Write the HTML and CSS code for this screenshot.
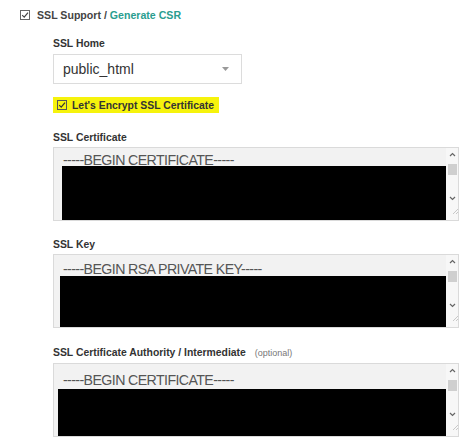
FILE: index.html
```html
<!DOCTYPE html>
<html>
<head>
<meta charset="utf-8">
<link rel="stylesheet" href="styles.css">
</head>
<body>
<div class="page">
  <div class="top-row">
    <svg class="cb" width="10" height="10" viewBox="0 0 10 10"><rect x="0.5" y="0.5" width="9" height="9" fill="#fff" stroke="#666"/><path d="M2.2 5.2 L4.2 7.2 L8 2.6" fill="none" stroke="#444" stroke-width="1.2"/></svg>
    <span class="top-label">SSL Support / <a class="link">Generate CSR</a></span>
  </div>
  <div class="section">
    <div class="label l-home">SSL Home</div>
    <div class="select">
      <span class="select-val">public_html</span>
      <svg class="caret" width="7" height="4" viewBox="0 0 7 4"><path d="M0 0 L7 0 L3.5 4 Z" fill="#999"/></svg>
    </div>
    <div class="hl-row">
      <span class="hl">
        <svg class="cb" width="10" height="10" viewBox="0 0 10 10"><rect x="0.5" y="0.5" width="9" height="9" fill="none" stroke="#555"/><path d="M2.2 5.2 L4.2 7.2 L8 2.6" fill="none" stroke="#333" stroke-width="1.2"/></svg>
        <span class="hl-text">Let's Encrypt SSL Certificate</span>
      </span>
    </div>

    <div class="label l-cert">SSL Certificate</div>
    <div class="ta">
      <div class="ta-body">
        <div class="ta-line t1">-----BEGIN CERTIFICATE-----</div>
        <div class="redact r1"></div>
      </div>
      <div class="sb">
        <svg width="7" height="5" viewBox="0 0 7 5" class="sb-up"><path d="M1 4 L3.5 1.5 L6 4" fill="none" stroke="#666" stroke-width="1.2"/></svg>
        <div class="thumb"></div>
        <svg width="7" height="5" viewBox="0 0 7 5" class="sb-down"><path d="M1 1 L3.5 3.5 L6 1" fill="none" stroke="#666" stroke-width="1.2"/></svg>
        <svg width="6" height="6" viewBox="0 0 6 6" class="grip"><path d="M6 1 L1 6 M6 4 L4 6" stroke="#bbb" stroke-width="0.8"/></svg>
      </div>
    </div>

    <div class="label l-key">SSL Key</div>
    <div class="ta">
      <div class="ta-body">
        <div class="ta-line t2">-----BEGIN RSA PRIVATE KEY-----</div>
        <div class="redact r2"></div>
      </div>
      <div class="sb">
        <svg width="7" height="5" viewBox="0 0 7 5" class="sb-up"><path d="M1 4 L3.5 1.5 L6 4" fill="none" stroke="#666" stroke-width="1.2"/></svg>
        <div class="thumb"></div>
        <svg width="7" height="5" viewBox="0 0 7 5" class="sb-down"><path d="M1 1 L3.5 3.5 L6 1" fill="none" stroke="#666" stroke-width="1.2"/></svg>
        <svg width="6" height="6" viewBox="0 0 6 6" class="grip"><path d="M6 1 L1 6 M6 4 L4 6" stroke="#bbb" stroke-width="0.8"/></svg>
      </div>
    </div>

    <div class="label l-ca">SSL Certificate Authority / Intermediate <span class="opt">(optional)</span></div>
    <div class="ta">
      <div class="ta-body">
        <div class="ta-line t3">-----BEGIN CERTIFICATE-----</div>
        <div class="redact r3"></div>
      </div>
      <div class="sb">
        <svg width="7" height="5" viewBox="0 0 7 5" class="sb-up"><path d="M1 4 L3.5 1.5 L6 4" fill="none" stroke="#666" stroke-width="1.2"/></svg>
        <div class="thumb"></div>
        <svg width="7" height="5" viewBox="0 0 7 5" class="sb-down"><path d="M1 1 L3.5 3.5 L6 1" fill="none" stroke="#666" stroke-width="1.2"/></svg>
        <svg width="6" height="6" viewBox="0 0 6 6" class="grip"><path d="M6 1 L1 6 M6 4 L4 6" stroke="#bbb" stroke-width="0.8"/></svg>
      </div>
    </div>
  </div>
</div>
</body>
</html>
```
FILE: styles.css
```css
* { box-sizing: border-box; }
html, body { margin: 0; padding: 0; background: #fff; }
body {
  font-family: "Liberation Sans", Arial, sans-serif;
  color: #333;
  width: 474px;
  height: 442px;
  overflow: hidden;
}
.page { padding-top: 8px; }
.top-row {
  display: flex;
  align-items: center;
  padding-left: 20px;
  height: 14px;
  gap: 7px;
}
.cb { display: block; flex: none; }
.top-label {
  font-size: 10.6px;
  font-weight: bold;
  color: #444;
  white-space: nowrap;
}
.link { color: #2a9d8f; }
.section {
  padding-left: 53px;
  width: 460px;
}
.label {
  font-size: 10.4px;
  font-weight: bold;
  color: #333;
  line-height: 13px;
  white-space: nowrap;
}
.l-home { margin-top: 15px; }
.l-cert { margin-top: 18px; }
.l-key { margin-top: 17px; }
.l-ca { margin-top: 18px; }
.opt {
  font-weight: normal;
  font-size: 9px;
  color: #777;
  margin-left: 6px;
}
.select {
  margin-top: 4px;
  width: 189px;
  height: 30px;
  border: 1px solid #dcdcdc;
  display: flex;
  align-items: center;
  justify-content: space-between;
  padding: 0 12px 0 9px;
  background: #fff;
}
.select-val {
  font-size: 14px;
  color: #333;
}
.caret { display: block; }
.hl-row {
  margin-top: 13px;
  display: flex;
}
.hl {
  background: #f6f30c;
  display: flex;
  align-items: center;
  gap: 5px;
  padding: 0 4px 0 4px;
  height: 16px;
  width: 166px;
}
.hl-text {
  font-size: 10.4px;
  font-weight: bold;
  color: #333;
  white-space: nowrap;
}
.ta {
  margin-top: 3px;
  width: 406px;
  height: 74px;
  border: 1px solid #dadada;
  background: #f2f2f2;
  display: flex;
}
.ta-body {
  flex: 1;
  display: flex;
  flex-direction: column;
  overflow: hidden;
}
.ta-line {
  flex: none;
  font-size: 14.2px;
  color: #555;
  padding-left: 9px;
  line-height: 14px;
  white-space: nowrap;
  letter-spacing: -0.6px;
}
.t1 { padding-top: 5px; height: 18px; }
.t2 { padding-top: 7px; height: 21px; }
.t3 { padding-top: 9px; height: 25px; }
.redact { flex: 1; background: #000; position: relative; }
.r1 { margin-left: 8px; }
.r2 { margin-left: 6px; }
.r3 { margin-left: 4px; }
.sb {
  width: 12px;
  flex: none;
  background: #f7f7f7;
  display: flex;
  flex-direction: column;
  align-items: center;
  padding-top: 4px;
}
.sb svg { display: block; }
.thumb {
  width: 9px;
  height: 11px;
  background: #cfcfcf;
  margin-top: 7px;
}
.sb-down { margin-top: 21px; }
.grip { margin-top: 7px; align-self: flex-end; }
```
